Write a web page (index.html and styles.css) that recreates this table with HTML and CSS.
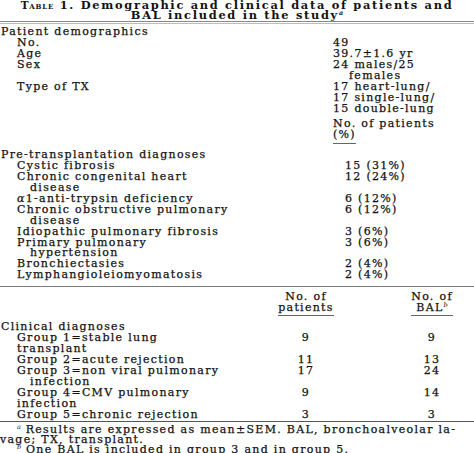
FILE: index.html
```html
<!DOCTYPE html>
<html>
<head>
<meta charset="utf-8">
<link rel="stylesheet" href="styles.css">
</head>
<body>
<div class="page">
  <div class="title"><span class="sc">Table</span> 1. Demographic and clinical data of patients and<br>BAL included in the study<sup class="fn">a</sup></div>
  <div class="rule-top"></div>

  <div class="grid g1">
    <div class="lab head">Patient demographics</div><div class="val"></div>
    <div class="lab sub">No.</div><div class="val">49</div>
    <div class="lab sub">Age</div><div class="val">39.7±1.6 yr</div>
    <div class="lab sub">Sex</div><div class="val hang">24 males/25<br>females</div>
    <div class="lab sub">Type of TX</div><div class="val">17 heart-lung/<br>17 single-lung/<br>15 double-lung</div>
    <div class="lab"></div><div class="val colhead"><div>No. of patients</div><div><span class="ul">(%)</span></div></div>
  </div>

  <div class="grid g2">
    <div class="lab head">Pre-transplantation diagnoses</div><div class="val"></div>
    <div class="lab sub">Cystic fibrosis</div><div class="val">15 (31%)</div>
    <div class="lab sub wrap">Chronic congenital heart<br>disease</div><div class="val">12 (24%)</div>
    <div class="lab sub"><i class="greek">α</i>1-anti-trypsin deficiency</div><div class="val">6 (12%)</div>
    <div class="lab sub wrap">Chronic obstructive pulmonary<br>disease</div><div class="val">6 (12%)</div>
    <div class="lab sub">Idiopathic pulmonary fibrosis</div><div class="val">3 (6%)</div>
    <div class="lab sub wrap">Primary pulmonary<br>hypertension</div><div class="val">3 (6%)</div>
    <div class="lab sub">Bronchiectasies</div><div class="val">2 (4%)</div>
    <div class="lab sub">Lymphangioleiomyomatosis</div><div class="val">2 (4%)</div>
  </div>
  <div class="rule-mid"></div>

  <div class="grid g3">
    <div class="lab"></div>
    <div class="num hd"><span class="ul">No. of<br>patients</span></div>
    <div class="num hd c3"><span class="ul">No. of<br>BAL<sup class="fn">b</sup></span></div>

    <div class="lab head">Clinical diagnoses</div><div class="num"></div><div class="num c3"></div>
    <div class="lab sub">Group 1=stable lung<br>transplant</div><div class="num">9</div><div class="num c3">9</div>
    <div class="lab sub">Group 2=acute rejection</div><div class="num">11</div><div class="num c3">13</div>
    <div class="lab sub wrap">Group 3=non viral pulmonary<br>infection</div><div class="num">17</div><div class="num c3">24</div>
    <div class="lab sub">Group 4=CMV pulmonary<br>infection</div><div class="num">9</div><div class="num c3">14</div>
    <div class="lab sub">Group 5=chronic rejection</div><div class="num">3</div><div class="num c3">3</div>
  </div>
  <div class="rule-bot"></div>

  <div class="notes">
    <p class="note"><sup class="fn">a</sup> Results are expressed as mean±SEM. BAL, bronchoalveolar la-<br>vage; TX, transplant.</p>
    <p class="note"><sup class="fn">b</sup> One BAL is included in group 3 and in group 5.</p>
  </div>
</div>
</body>
</html>
```

FILE: styles.css
```css
html, body {
  margin: 0;
  padding: 0;
  background: #ffffff;
}

.page {
  width: 474px;
  height: 453px;
  overflow: hidden;
  color: #121212;
  font-family: "DejaVu Serif", "Liberation Serif", serif;
  font-size: 11px;
  line-height: 10.9px;
  letter-spacing: 1.3px;
  -webkit-text-stroke: 0.25px #121212;
}

.title {
  font-weight: bold;
  font-size: 11.4px;
  text-align: center;
  line-height: 9.6px;
  margin-top: 1px;
  letter-spacing: 1.7px;
  -webkit-text-stroke: 0;
  white-space: nowrap;
}

.sc {
  font-variant: small-caps;
  font-size: 10.5px;
  letter-spacing: 0.8px;
}

.fn {
  font-size: 6.5px;
  line-height: 0;
  vertical-align: 4px;
  font-style: italic;
  letter-spacing: 0;
  -webkit-text-stroke: 0;
}

.rule-top {
  height: 1px;
  margin-top: 1px;
  border-top: 1px solid #8a8a8a;
  border-bottom: 1px solid #bdbdbd;
  margin-bottom: 3px;
}

.grid {
  display: grid;
}

.g1 {
  grid-template-columns: 333px 1fr;
}

.g2 {
  grid-template-columns: 345px 1fr;
  margin-top: 6px;
}

.g3 {
  grid-template-columns: 262px 88px 1fr;
  line-height: 11px;
}

.lab {
  white-space: nowrap;
}

.head {
  padding-left: 1px;
}

.sub {
  padding-left: 17px;
}

.wrap {
  padding-left: 30px;
  text-indent: -13px;
}

.val {
  white-space: nowrap;
}

.hang {
  padding-left: 16px;
  text-indent: -16px;
}

.colhead {
  margin-top: 5px;
}

.ul {
  display: inline-block;
  border-bottom: 1px solid #666;
  padding-bottom: 2px;
}

.greek {
  font-style: italic;
}

.rule-mid {
  height: 0;
  border-top: 1px solid #7a7a7a;
  margin-top: 5px;
  margin-bottom: 4px;
}

.num {
  text-align: center;
  white-space: nowrap;
}

.c3 {
  padding-left: 40px;
}

.hd {
  margin-bottom: 5px;
}

.rule-bot {
  height: 0;
  border-top: 1px solid #555;
  margin-top: 1px;
  margin-bottom: 3px;
}

.notes {
  line-height: 10px;
}

.note {
  margin: 0;
  text-indent: 17px;
  white-space: nowrap;
}
```
